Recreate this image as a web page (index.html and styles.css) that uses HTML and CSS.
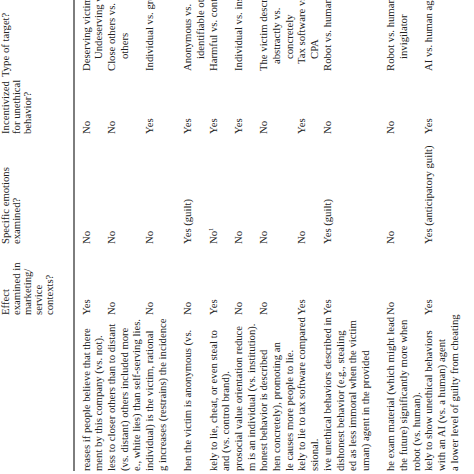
FILE: index.html
```html
<!DOCTYPE html>
<html>
<head>
<meta charset="utf-8">
<link rel="stylesheet" href="styles.css">
</head>
<body>
<div class="page">
  <div class="rot">
    <div class="hdr">
      <div class="c1"></div>
      <div class="c2">Effect<br>examined in<br>marketing/<br>service<br>contexts?</div>
      <div class="c3">Specific emotions<br>examined?</div>
      <div class="c4">Incentivized<br>for unethical<br>behavior?</div>
      <div class="c5">Type of target?</div>
    </div>
    <div class="tbody">
      <div class="row">
        <div class="c1"><div class="ln">reases if people believe that there</div><div class="ln">ment by this company (vs. not).</div></div>
        <div class="c2">Yes</div><div class="c3">No</div><div class="c4">No</div>
        <div class="c5"><div class="t1">Deserving victim vs.</div><div class="t2">Undeserving victim</div></div>
      </div>
      <div class="row">
        <div class="c1"><div class="ln">less to closer others than to distant</div><div class="ln">(vs. distant) others included more</div><div class="ln">e., white lies) than self-serving lies.</div></div>
        <div class="c2">No</div><div class="c3">No</div><div class="c4">No</div>
        <div class="c5"><div class="t1">Close others vs. distant</div><div class="t2">others</div></div>
      </div>
      <div class="row">
        <div class="c1"><div class="ln">individual) is the victim, rational</div><div class="ln">g increases (restrains) the incidence</div><div class="ln">&nbsp;</div></div>
        <div class="c2">No</div><div class="c3">No</div><div class="c4">Yes</div>
        <div class="c5"><div class="t1">Individual vs. group</div></div>
      </div>
      <div class="row">
        <div class="c1"><div class="ln">hen the victim is anonymous (vs.</div><div class="ln">&nbsp;</div></div>
        <div class="c2">No</div><div class="c3">Yes (guilt)</div><div class="c4">Yes</div>
        <div class="c5"><div class="t1">Anonymous vs.</div><div class="t2">identifiable others</div></div>
      </div>
      <div class="row">
        <div class="c1"><div class="ln">kely to lie, cheat, or even steal to</div><div class="ln">and (vs. control brand).</div></div>
        <div class="c2">Yes</div><div class="c3">No<sup>1</sup></div><div class="c4">Yes</div>
        <div class="c5"><div class="t1">Harmful vs. control brand</div></div>
      </div>
      <div class="row">
        <div class="c1"><div class="ln">prosocial value orientation reduce</div><div class="ln">m is an individual (vs. institution).</div></div>
        <div class="c2">No</div><div class="c3">No</div><div class="c4">Yes</div>
        <div class="c5"><div class="t1">Individual vs. institution</div></div>
      </div>
      <div class="row">
        <div class="c1"><div class="ln">honest behavior is described</div><div class="ln">hen concretely), promoting an</div><div class="ln">le causes more people to lie.</div></div>
        <div class="c2">No</div><div class="c3">No</div><div class="c4">No</div>
        <div class="c5"><div class="t1">The victim described</div><div class="t2 t2b">abstractly vs.</div><div class="t2">concretely</div></div>
      </div>
      <div class="row">
        <div class="c1"><div class="ln">kely to lie to tax software compared</div><div class="ln">ssional.</div></div>
        <div class="c2">Yes</div><div class="c3">No</div><div class="c4">Yes</div>
        <div class="c5"><div class="t1 t1b">Tax software vs.</div><div class="t2">CPA</div></div>
      </div>
      <div class="row">
        <div class="c1"><div class="ln">ive unethical behaviors described in</div><div class="ln">dishonest behavior (e.g., stealing</div><div class="ln">ed as less immoral when the victim</div><div class="ln">uman) agent in the provided</div><div class="ln">&nbsp;</div></div>
        <div class="c2">Yes</div><div class="c3">Yes (guilt)</div><div class="c4">No</div>
        <div class="c5"><div class="t1">Robot vs. human agent</div></div>
      </div>
      <div class="row">
        <div class="c1"><div class="ln">he exam material (which might lead</div><div class="ln">the future) significantly more when</div><div class="ln">robot (vs. human).</div></div>
        <div class="c2">No</div><div class="c3">No</div><div class="c4">No</div>
        <div class="c5"><div class="t1">Robot vs. human</div><div class="t2">invigilator</div></div>
      </div>
      <div class="row">
        <div class="c1"><div class="ln">kely to show unethical behaviors</div><div class="ln">with an AI (vs. a human) agent</div><div class="ln">a lower level of guilty from cheating</div></div>
        <div class="c2">Yes</div><div class="c3">Yes (anticipatory guilt)</div><div class="c4">Yes</div>
        <div class="c5"><div class="t1">AI vs. human agent</div></div>
      </div>
    </div>
  </div>
</div>
</body>
</html>
```
FILE: styles.css
```css
html, body {
  margin: 0;
  padding: 0;
  background: #fff;
}
.page {
  width: 474px;
  height: 474px;
  overflow: hidden;
  background: #fff;
  font-family: "Liberation Serif", "Times New Roman", serif;
  font-size: 10.7px;
  color: #222;
}
.rot {
  width: 474px;
  height: 474px;
  transform: rotate(-90deg);
}
.hdr,
.row {
  display: grid;
  grid-template-columns: 156px 71px 110px 57px 130px;
}
.hdr {
  margin-top: -3px;
  height: 73px;
  line-height: 11px;
  border-bottom: 2px solid #7d7d7d;
  white-space: nowrap;
}
.tbody {
  padding-top: 4.5px;
  line-height: 12.7px;
}
.row > div {
  white-space: nowrap;
}
.ln {
  white-space: nowrap;
}
.row .c5 .t1 {
  padding-left: 6px;
}
.row .c5 .t1b {
  padding-left: 13px;
}
.row .c5 .t2 {
  padding-left: 18px;
}
.row .c5 .t2b {
  padding-left: 13px;
}
sup {
  font-size: 6.5px;
  line-height: 0;
  vertical-align: 4px;
}
```
